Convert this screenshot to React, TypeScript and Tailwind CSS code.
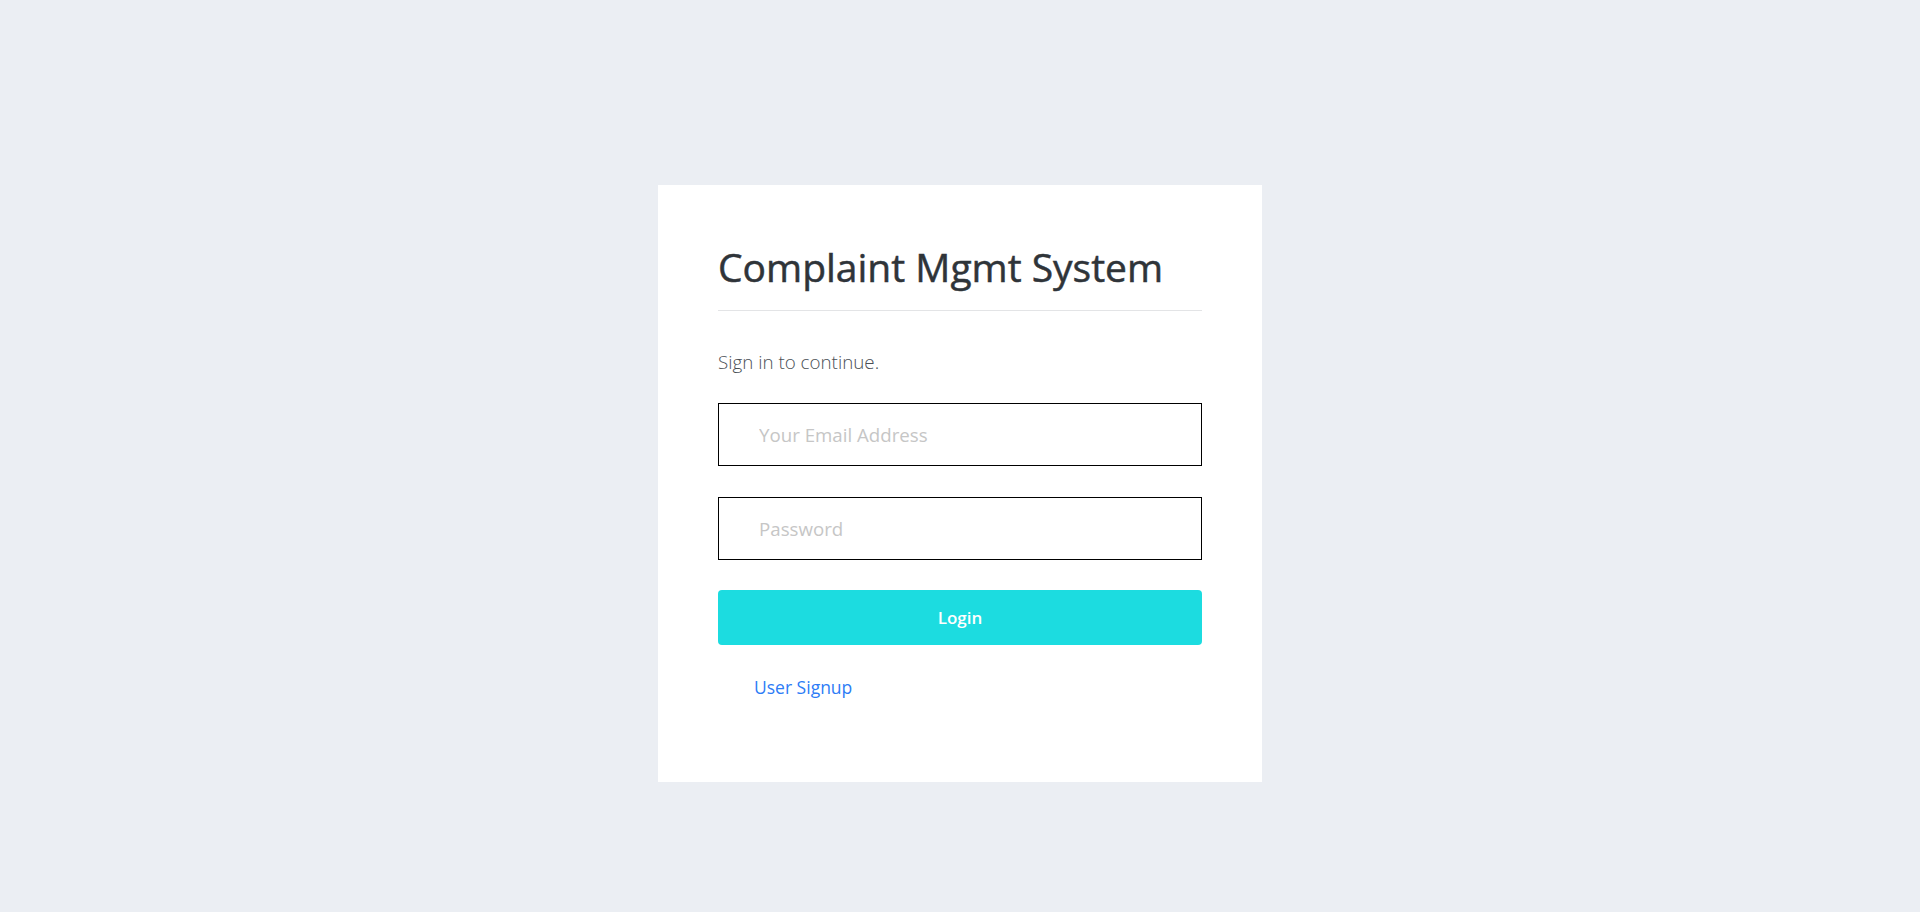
import { useState } from 'react';

export default function App() {
  const [email, setEmail] = useState('');
  const [password, setPassword] = useState('');

  return (
    <div
      className="min-h-screen bg-[#ebeef3] pt-[185px]"
      style={{ fontFamily: '"Open Sans", "Liberation Sans", sans-serif' }}
    >
      <div className="mx-auto h-[597px] w-[604px] bg-white px-[60px] pt-[58px]">
        {/* Heading */}
        <h1 className="border-b border-[#e3e4e6] pb-[19px] text-[39px] font-normal leading-[48px] text-[#2f3439] [-webkit-text-stroke:0.5px_#2f3439]">
          Complaint Mgmt System
        </h1>

        <p className="mt-[39px] text-[18.8px] font-light leading-[24px] text-[#4a4f55]">
          Sign in to continue.
        </p>

        <form onSubmit={(e) => e.preventDefault()}>
          <input
            type="email"
            value={email}
            onChange={(e) => setEmail(e.target.value)}
            placeholder="Your Email Address"
            className="mt-[29px] block h-[63px] w-full border border-black px-[40px] text-[18.7px] text-[#333] outline-none placeholder:text-[#c6c6c6]"
          />
          <input
            type="password"
            value={password}
            onChange={(e) => setPassword(e.target.value)}
            placeholder="Password"
            className="mt-[31px] block h-[63px] w-full border border-black px-[40px] text-[18.7px] text-[#333] outline-none placeholder:text-[#c6c6c6]"
          />
          <button
            type="submit"
            className="mt-[30px] block h-[55px] w-full rounded-[4px] bg-[#1cdce0] text-[17px] font-semibold text-white"
          >
            Login
          </button>
        </form>

        <a
          href="#"
          className="mt-[30px] ml-[36px] inline-block text-[17.5px] leading-[24px] text-[#2d7cf6]"
        >
          User Signup
        </a>
      </div>
    </div>
  );
}
